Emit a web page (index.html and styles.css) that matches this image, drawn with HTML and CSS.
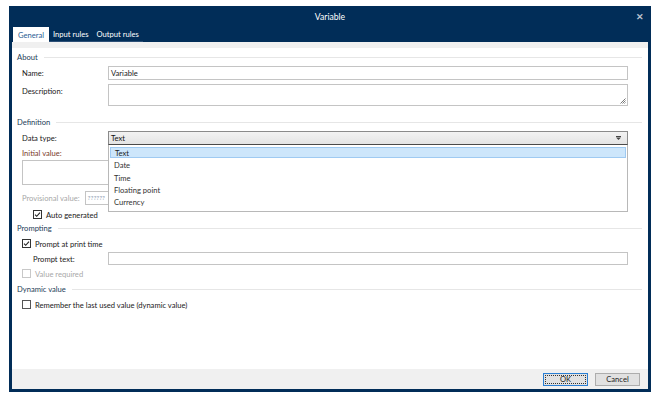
FILE: index.html
```html
<!DOCTYPE html>
<html>
<head>
<meta charset="utf-8">
<link rel="stylesheet" href="styles.css">
</head>
<body>
<div class="window">
  <div class="titlebar">
    <span class="title">Variable</span>
    <span class="close">✕</span>
  </div>
  <div class="tabs">
    <span class="tab active">General</span>
    <span class="tab">Input rules</span>
    <span class="tab">Output rules</span>
  </div>
  <div class="strip"></div>
  <div class="panel">
    <div class="group"><span>About</span></div>
    <div class="row r-name">
      <span class="label">Name:</span>
      <div class="input">Variable</div>
    </div>
    <div class="row r-desc">
      <span class="label top">Description:</span>
      <div class="input area">
        <svg class="grip" width="6" height="6" viewBox="0 0 6 6"><path d="M5.5 0.5L0.5 5.5M5.5 2.5L2.5 5.5M5.5 4.5L4.5 5.5" stroke="#555" stroke-width="0.8"/></svg>
      </div>
    </div>

    <div class="group g-def"><span>Definition</span></div>
    <div class="row r-type">
      <span class="label">Data type:</span>
      <div class="select">
        <span>Text</span>
        <svg class="arrow" width="5" height="4" viewBox="0 0 5 4"><rect x="0" y="0" width="5" height="1" fill="#444"/><path d="M0 1.5H5L2.5 4Z" fill="#444"/></svg>
        <div class="dropdown">
          <div class="item sel">Text</div>
          <div class="item">Date</div>
          <div class="item">Time</div>
          <div class="item">Floating point</div>
          <div class="item">Currency</div>
        </div>
      </div>
    </div>
    <div class="row r-init">
      <span class="label warn">Initial value:</span>
    </div>
    <div class="initarea"></div>
    <div class="row r-prov">
      <span class="label dim short">Provisional value:</span>
      <div class="input prov">??????</div>
    </div>
    <div class="check indent r-auto">
      <svg class="cb" width="9" height="9" viewBox="0 0 9 9"><rect x="0.5" y="0.5" width="8" height="8" fill="#fff" stroke="#333"/><path d="M2 4.6L3.7 6.3L7 2.6" fill="none" stroke="#222" stroke-width="1.1"/></svg>
      <span>Auto generated</span>
    </div>

    <div class="group g-prompt"><span>Prompting</span></div>
    <div class="check r-pat">
      <svg class="cb" width="9" height="9" viewBox="0 0 9 9"><rect x="0.5" y="0.5" width="8" height="8" fill="#fff" stroke="#333"/><path d="M2 4.6L3.7 6.3L7 2.6" fill="none" stroke="#222" stroke-width="1.1"/></svg>
      <span>Prompt at print time</span>
    </div>
    <div class="row r-ptext">
      <span class="label indentlabel">Prompt text:</span>
      <div class="input"></div>
    </div>
    <div class="check r-req dim">
      <svg class="cb" width="9" height="9" viewBox="0 0 9 9"><rect x="0.5" y="0.5" width="8" height="8" fill="#fff" stroke="#c8c8c8"/></svg>
      <span>Value required</span>
    </div>

    <div class="group g-dyn"><span>Dynamic value</span></div>
    <div class="check r-rem">
      <svg class="cb" width="9" height="9" viewBox="0 0 9 9"><rect x="0.5" y="0.5" width="8" height="8" fill="#fff" stroke="#555"/></svg>
      <span>Remember the last used value (dynamic value)</span>
    </div>
  </div>
  <div class="footer">
    <button class="btn ok">OK</button>
    <button class="btn">Cancel</button>
  </div>
</div>
</body>
</html>
```
FILE: styles.css
```css
* { box-sizing: border-box; }
body {
  margin: 0;
  background: #ffffff;
  font-family: "Lato", "Noto Sans", sans-serif;
  font-size: 7.6px;
  color: #1a1a1a;
}
.window {
  margin: 6px 6px 0 9px;
  height: 386px;
  background: #012d58;
  padding: 0 3px 3px 3px;
  display: flex;
  flex-direction: column;
}
.titlebar {
  height: 21px;
  display: flex;
  align-items: center;
  justify-content: center;
  position: relative;
  color: #ffffff;
}
.title { font-size: 8.6px; }
.close {
  position: absolute;
  right: 4px;
  top: 5px;
  font-size: 9px;
  font-weight: bold;
  color: #b8c2ce;
}
.tabs {
  height: 15px;
  display: flex;
  align-items: stretch;
  padding-left: 1px;
}
.tab {
  display: flex;
  align-items: center;
  padding: 0 4px;
  color: #ffffff;
  border-bottom: 1px solid #2c4f76;
}
.tab.active {
  background: #ffffff;
  color: #2a5d94;
  border-bottom: none;
  padding: 0 5px;
}
.strip { height: 6px; background: #f0f0f0; }
.panel {
  flex: 1;
  background: #ffffff;
  padding: 2px 20px 0 0;
  display: flex;
  flex-direction: column;
}
.group {
  height: 14px;
  display: flex;
  align-items: center;
  padding-left: 5px;
  color: #233c57;
}
.group::after {
  content: "";
  flex: 1;
  height: 1px;
  background: #e6e6e6;
  margin-left: 6px;
  margin-right: -14px;
}
.g-def { margin-top: 9px; }
.g-prompt { margin-top: 0; }
.g-dyn { margin-top: 2px; }
.row {
  display: flex;
  align-items: center;
  padding-left: 10px;
}
.label { width: 86px; flex: none; white-space: nowrap; }
.label.top { align-self: flex-start; padding-top: 2px; }
.label.short { width: auto; margin-right: 5px; }
.label.warn { color: #7a3a2a; }
.dim, .label.dim { color: #a8a8a8; }
.indentlabel { padding-left: 11px; }
.input {
  flex: 1;
  height: 14px;
  border: 1px solid #c4c4c4;
  padding-left: 2px;
  display: flex;
  align-items: center;
}
.r-name { margin-top: 2px; }
.r-desc { margin-top: 4px; }
.area { height: 22px; position: relative; }
.grip { position: absolute; right: 1px; bottom: 1px; }
.r-type { margin-top: 2px; position: relative; z-index: 2; }
.select {
  flex: 1;
  height: 14px;
  border: 1px solid #8a8a8a;
  border-bottom-color: #4a4a4a;
  background: linear-gradient(#f2f2f2, #e4e4e4);
  display: flex;
  align-items: center;
  padding-left: 2px;
  position: relative;
  color: #111;
}
.arrow { position: absolute; right: 6px; top: 4px; }
.dropdown {
  position: absolute;
  left: -1px;
  right: -1px;
  top: 13px;
  height: 67px;
  background: #ffffff;
  border: 1px solid #b8b8b8;
  border-top: none;
  padding: 2px 1px 0 1px;
}
.item {
  height: 12.4px;
  display: flex;
  align-items: center;
  padding-left: 4px;
  color: #333;
}
.item.sel {
  height: 11px;
  background: #cde6fb;
  border: 1px solid #9fcaf2;
  margin-bottom: 1px;
  color: #222;
}
.r-init { height: 13px; margin-top: 1px; }
.initarea {
  margin-left: 10px;
  height: 25px;
  border: 1px solid #c4c4c4;
  margin-top: 1px;
}
.r-prov { margin-top: 6px; height: 13px; }
.prov {
  flex: none;
  width: 40px;
  color: #8a9ab0;
  font-size: 6.5px;
}
.check {
  display: flex;
  align-items: center;
  height: 13px;
  padding-left: 10px;
}
.check .cb { margin-right: 4px; flex: none; }
.check.indent { padding-left: 21px; }
.r-auto { margin-top: 4px; }
.r-pat { margin-top: 2px; }
.r-ptext { margin-top: 2px; height: 13px; }
.r-ptext .input { height: 13px; }
.r-req { margin-top: 2px; }
.r-rem { margin-top: 2px; }
.footer {
  height: 20px;
  background: #f0f0f0;
  display: flex;
  align-items: center;
  justify-content: flex-end;
  gap: 7px;
  padding-right: 8px;
}
.btn {
  font-family: inherit;
  font-size: 7.6px;
  width: 45px;
  height: 13px;
  padding: 0;
  background: #e1e1e1;
  border: 1px solid #adadad;
  color: #222;
}
.btn.ok {
  border-color: #2a7fd4;
  outline: 1px dotted #333;
  outline-offset: -3px;
}
```
